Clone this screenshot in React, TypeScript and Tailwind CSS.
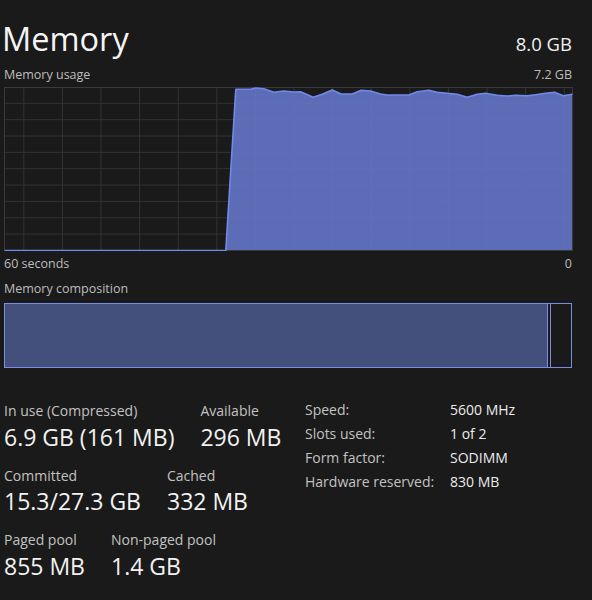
const usage: [number, number][] = [
  [0, 163.5], [221.3, 163.5], [231.3, 2.3], [246, 2.3], [251, 1], [259.3, 1.7],
  [269.3, 5.3], [279.3, 4], [289.3, 5], [296, 4.7], [308.7, 10.3], [317.7, 7.3],
  [327.7, 3], [336.7, 7], [347.7, 7], [356.7, 3.3], [366, 4], [376, 7],
  [382.7, 8], [404.3, 8], [412.7, 4.7], [424.3, 3.3], [432.7, 5.3], [442.7, 6.3],
  [452.7, 7.3], [462.7, 10.3], [472.7, 7.3], [481, 6.3], [492.7, 8.3], [502.7, 9],
  [511, 8.3], [522.7, 8.7], [531, 7.7], [541, 6.3], [550, 5.3], [558.7, 8.7],
  [568, 7.3],
];

function UsageChart() {
  const W = 568;
  const H = 164;
  const line = usage.map(([x, y]) => `${x},${y}`).join(" ");
  const area = `0,${H} ${line} ${W},${H}`;
  const cols = Array.from({ length: 15 }, (_, i) => 19.3 + i * 38.6);
  const rows = Array.from({ length: 9 }, (_, i) => (i + 1) * 16.34);

  return (
    <svg width={W + 1} height={H} viewBox={`-0.5 0 ${W + 1} ${H}`} className="block">
      {cols.map((x) => (
        <line key={`c${x}`} x1={x} y1={0} x2={x} y2={H} stroke="#333333" strokeWidth={1} />
      ))}
      {rows.map((y) => (
        <line key={`r${y}`} x1={0} y1={y} x2={W} y2={y} stroke="#333333" strokeWidth={1} />
      ))}
      <polygon points={area} fill="#6576c8" fillOpacity={0.9} />
      <rect x={0} y={0.5} width={W} height={H - 1} fill="none" stroke="#3a3a3a" strokeWidth={1} />
      <polyline points={line} fill="none" stroke="#7189ea" strokeWidth={1.6} strokeLinejoin="round" />
    </svg>
  );
}

function Stat({ label, value }: { label: string; value: string }) {
  return (
    <div className="flex flex-col">
      <span className="text-[14px] leading-[18px] text-[#c2c2c2]">{label}</span>
      <span className="text-[23px] leading-[28px] text-[#f2f2f2] mt-[2.5px]">{value}</span>
    </div>
  );
}

const specs: [string, string][] = [
  ["Speed:", "5600 MHz"],
  ["Slots used:", "1 of 2"],
  ["Form factor:", "SODIMM"],
  ["Hardware reserved:", "830 MB"],
];

export default function App() {
  return (
    <div
      className="w-[592px] h-[600px] overflow-hidden bg-[#1a1a1a] pl-[4px] pr-[20px] text-white"
      style={{ fontFamily: '"Open Sans", "Noto Sans", sans-serif' }}
    >
      {/* Header */}
      <div className="flex items-end justify-between pt-[19px]">
        <span className="text-[32.5px] leading-[40px] -ml-[2px] text-[#f5f5f5]">Memory</span>
        <span className="text-[18.5px] leading-[28px] mb-[1px] text-[#f0f0f0]">8.0 GB</span>
      </div>

      <div className="flex justify-between text-[12.5px] leading-[16px] text-[#bdbdbd] mt-[8px]">
        <span>Memory usage</span>
        <span>7.2 GB</span>
      </div>

      <div className="mt-[4px]">
        <UsageChart />
      </div>

      <div className="flex justify-between text-[12.5px] leading-[16px] text-[#bdbdbd] mt-[5px]">
        <span>60 seconds</span>
        <span>0</span>
      </div>

      <div className="text-[12.5px] leading-[16px] text-[#bdbdbd] mt-[9px]">Memory composition</div>

      {/* Composition bar */}
      <div className="mt-[6px] flex h-[65px] border border-[#7a8ee6]">
        <div className="flex-1 bg-[#44507c] border-r border-[#7a8ee6]" />
        <div className="w-[3px] border-r border-[#7a8ee6]" />
        <div className="w-[20px]" />
      </div>

      {/* Stats */}
      <div className="flex mt-[34px]">
        <div className="flex flex-col gap-[16px] w-[301px]">
          <div className="flex gap-[26px]">
            <Stat label="In use (Compressed)" value="6.9 GB (161 MB)" />
            <Stat label="Available" value="296 MB" />
          </div>
          <div className="flex gap-[26px]">
            <Stat label="Committed" value="15.3/27.3 GB" />
            <Stat label="Cached" value="332 MB" />
          </div>
          <div className="flex gap-[26px]">
            <Stat label="Paged pool" value="855 MB" />
            <Stat label="Non-paged pool" value="1.4 GB" />
          </div>
        </div>
        <div className="grid grid-cols-[145px_auto] auto-rows-[24px] text-[14px] leading-[18px] -mt-[1px]">
          {specs.map(([k, v]) => (
            <div key={k} className="contents">
              <span className="text-[#c2c2c2]">{k}</span>
              <span className="text-[#ececec]">{v}</span>
            </div>
          ))}
        </div>
      </div>
    </div>
  );
}
